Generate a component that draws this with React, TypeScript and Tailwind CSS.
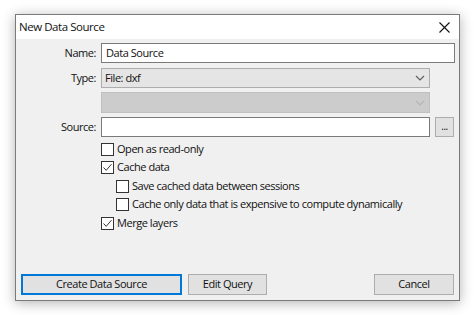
const Check = ({ checked, label }: { checked?: boolean; label: string }) => {
  return (
    <div className="flex items-center h-[18px] gap-[3px]">
      <div className="w-[13px] h-[13px] border border-[#333333] bg-white flex items-center justify-center">
        {checked && (
          <svg width="11" height="11" viewBox="0 0 11 11">
            <path d="M1.5 5.5 L4.2 8.3 L9.5 2.2" fill="none" stroke="#333" strokeWidth="1" />
          </svg>
        )}
      </div>
      <span>{label}</span>
    </div>
  );
};

const Chevron = ({ color }: { color: string }) => (
  <svg width="10" height="6" viewBox="0 0 10 6" className="mr-[4px]">
    <path d="M1 1 L5 5 L9 1" fill="none" stroke={color} strokeWidth="1.2" />
  </svg>
);

const App = () => {
  return (
    <div
      className="w-[474px] h-[315px] bg-white pt-[14px] pl-[15px] text-[11px] tracking-[-0.45px] text-[#111]"
      style={{ fontFamily: '"Segoe UI", "Open Sans", sans-serif' }}
    >
      <div className="w-[445px] h-[287px] border border-[#7a7a7a] bg-[#f0f0f0] flex flex-col shadow-[0_2px_12px_rgba(0,0,0,0.3)]">
        {/* title bar */}
        <div className="h-[24px] bg-white flex items-center justify-between pl-[3px] pr-[9px]">
          <span className="text-[11.5px]">New Data Source</span>
          <svg width="11" height="11" viewBox="0 0 11 11">
            <path d="M0.5 0.5 L10.5 10.5 M10.5 0.5 L0.5 10.5" stroke="#111" strokeWidth="1.1" />
          </svg>
        </div>

        {/* form */}
        <div className="flex-1 flex flex-col pt-[4px] pr-[4px]">
          <div className="grid grid-cols-[80px_1fr] gap-x-[5px] items-center">
            <span className="text-right">Name:</span>
            <div className="h-[20px] border border-[#7a7a7a] bg-white flex items-center px-[4px]">Data Source</div>
          </div>
          <div className="grid grid-cols-[80px_1fr] gap-x-[5px] items-center mt-[5px]">
            <span className="text-right">Type:</span>
            <div className="flex">
              <div className="w-[329px] h-[20px] border border-[#adadad] bg-[#e5e5e5] flex items-center justify-between pl-[3px]">
                <span>File: dxf</span>
                <Chevron color="#606060" />
              </div>
            </div>
          </div>
          <div className="grid grid-cols-[80px_1fr] gap-x-[5px] items-center mt-[4px]">
            <span />
            <div className="flex">
              <div className="w-[329px] h-[21px] border border-[#bfbfbf] bg-[#cccccc] flex items-center justify-end">
                <Chevron color="#b5b5b5" />
              </div>
            </div>
          </div>
          <div className="grid grid-cols-[80px_1fr] gap-x-[5px] items-center mt-[4px]">
            <span className="text-right">Source:</span>
            <div className="flex gap-[5px]">
              <div className="w-[329px] h-[20px] border border-[#7a7a7a] bg-white" />
              <div className="w-[19px] h-[20px] border border-[#adadad] bg-[#e1e1e1] flex items-center justify-center text-[10px] leading-none pb-[2px]">
                ...
              </div>
            </div>
          </div>

          <div className="flex flex-col pl-[85px] mt-[3px] gap-[0.5px]">
            <Check label="Open as read-only" />
            <Check checked label="Cache data" />
            <div className="pl-[15px] flex flex-col gap-[0.5px]">
              <Check label="Save cached data between sessions" />
              <Check label="Cache only data that is expensive to compute dynamically" />
            </div>
            <Check checked label="Merge layers" />
          </div>

          <div className="flex-1" />

          <div className="flex items-center pl-[5px] pb-[5px]">
            <div className="w-[161px] h-[21px] border-2 border-[#0078d7] bg-[#e1e1e1] flex items-center justify-center">
              Create Data Source
            </div>
            <div className="w-[79px] h-[21px] ml-[6px] border border-[#adadad] bg-[#e1e1e1] flex items-center justify-center">
              Edit Query
            </div>
            <div className="flex-1" />
            <div className="w-[80px] h-[21px] mr-[1px] border border-[#adadad] bg-[#e1e1e1] flex items-center justify-center">
              Cancel
            </div>
          </div>
        </div>
      </div>
    </div>
  );
};

export default App;
